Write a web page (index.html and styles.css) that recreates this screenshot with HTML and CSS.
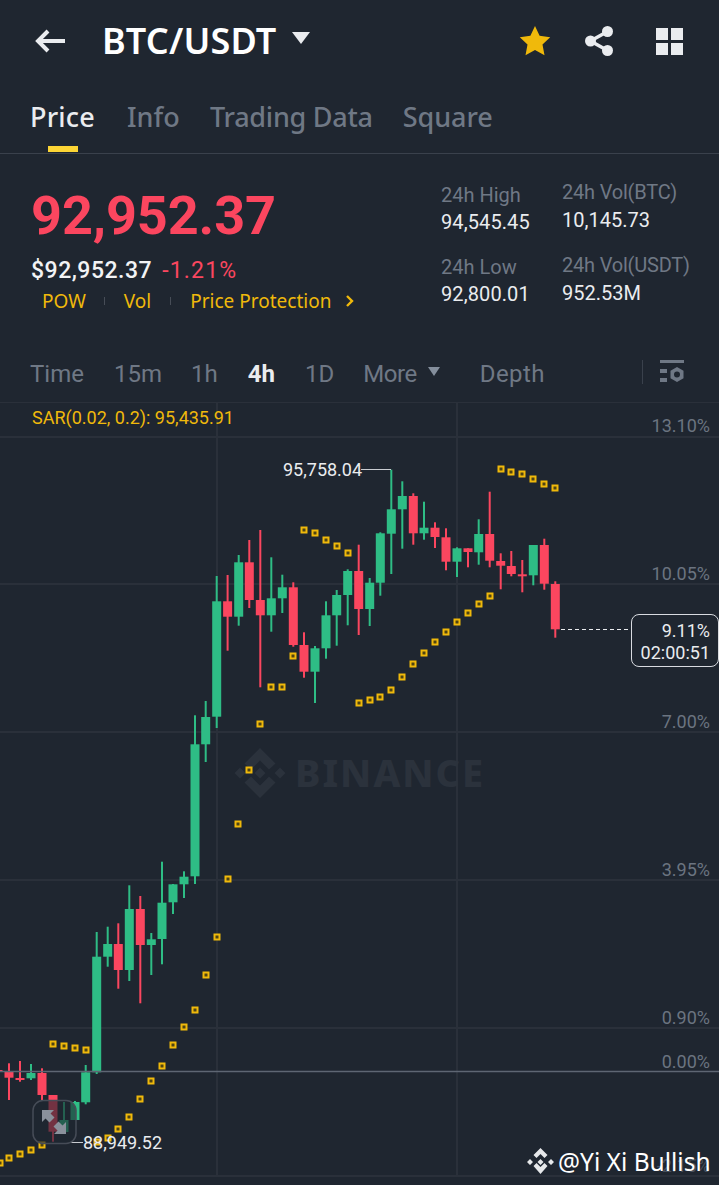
FILE: index.html
```html
<!DOCTYPE html>
<html lang="en">
<head>
<meta charset="utf-8">
<title>BTC/USDT</title>
<link rel="stylesheet" href="styles.css">
</head>
<body>
<div class="page">
  <header class="header">
    <svg class="icon-back" width="32" height="26" viewBox="0 0 32 26"><path d="M30 13H4M13 3 3 13l10 10" fill="none" stroke="#eaecef" stroke-width="4"/></svg>
    <h1 class="pair">BTC/USDT</h1>
    <svg class="icon-caret" width="18" height="12" viewBox="0 0 18 12"><path d="M0 0h18L9 12z" fill="#eaecef"/></svg>
    <div class="header-actions">
      <svg class="act-star" width="32" height="32" viewBox="0 0 32 32"><path d="M16 1l4.600 9.800 10.600 1.400-7.700 7.400 2 10.600L16 25l-9.500 5.200 2-10.600L.8 12.200l10.600-1.400z" fill="#f0b90b"/></svg>
      <svg class="act-share" width="30" height="32" viewBox="0 0 30 32"><g fill="#eaecef"><circle cx="23.500" cy="6.500" r="5.500"/><circle cx="23.500" cy="25.500" r="5.500"/><circle cx="6.500" cy="16" r="5.500"/></g><path d="M23.500 6.500 6.500 16l17 9.500" fill="none" stroke="#eaecef" stroke-width="3.500"/></svg>
      <svg class="act-grid" width="28" height="28" viewBox="0 0 28 28"><path d="M0 1h12v12H0zM15 1h12v12H15zM0 16h12v12H0zM15 16h12v12H15z" fill="#eaecef"/></svg>
    </div>
  </header>
  <nav class="tabs">
    <a class="tab tab-active">Price</a>
    <a class="tab tab-info">Info</a>
    <a class="tab tab-data">Trading Data</a>
    <a class="tab tab-square">Square</a>
  </nav>
  <section class="summary">
    <div class="quote">
      <div class="last-price">92,952.37</div>
      <div class="sub-price"><span class="fiat">$92,952.37</span><span class="change">-1.21%</span></div>
      <div class="tags">
        <span>POW</span><i class="tag-sep"></i><span>Vol</span><i class="tag-sep"></i><span>Price Protection</span>
        <svg class="chev" width="10" height="14" viewBox="0 0 10 14"><path d="M2 2l5 5-5 5" fill="none" stroke="#f0b90b" stroke-width="2.400"/></svg>
      </div>
    </div>
    <div class="stats stats-a">
      <div class="stat"><div class="stat-label">24h High</div><div class="stat-value">94,545.45</div></div>
      <div class="stat"><div class="stat-label">24h Low</div><div class="stat-value">92,800.01</div></div>
    </div>
    <div class="stats stats-b">
      <div class="stat"><div class="stat-label">24h Vol(BTC)</div><div class="stat-value">10,145.73</div></div>
      <div class="stat"><div class="stat-label">24h Vol(USDT)</div><div class="stat-value">952.53M</div></div>
    </div>
  </section>
  <div class="intervals">
    <span class="iv iv-time">Time</span>
    <span class="iv iv-15">15m</span>
    <span class="iv iv-1h">1h</span>
    <span class="iv iv-4h">4h</span>
    <span class="iv iv-1d">1D</span>
    <span class="iv iv-more">More</span>
    <svg class="more-caret" width="12" height="9" viewBox="0 0 12 9"><path d="M0 0h12L6 9z" fill="#848e9c"/></svg>
    <span class="iv iv-depth">Depth</span>
    <i class="iv-sep"></i>
    <svg class="iv-settings" width="24" height="24" viewBox="0 0 24 24"><g fill="#6f7885"><path d="M0 0h24v3H0zM0 9h7v4H0zM0 18h7v4H0z"/><path fill-rule="evenodd" d="M17 7l6.500 3.700v7.600L17 22l-6.500-3.700v-7.600zM17 11.500a3 3 0 1 0 0 6 3 3 0 0 0 0-6z"/></g></svg>
  </div>
  <div class="chart">
    <svg id="plot" class="plot" width="719" height="783" viewBox="0 402 719 783">
      <g id="grid"></g>
      <g class="mark">
        <path d="M260 748l15.500 15.500-6.500 6-9-9-9 9-6.500-6zM260 798l15.500-15.500-6.500-6-9 9-9-9-6.500 6zM234.500 773l5.500-5.500 5.500 5.500-5.500 5.500zM254.500 773l5.500-5.500 5.500 5.500-5.500 5.500zM274.500 773l5.500-5.500 5.500 5.500-5.500 5.500z" fill="#2b323c"/>
        <text x="295" y="787" class="mark-text">BINANCE</text>
      </g>
      <g id="candles"></g>
      <g id="sar"></g>
      <line x1="0" x2="719" y1="1071.500" y2="1071.500" class="zero"/>
      <g class="axis">
        <text x="710" y="432">13.10%</text>
        <text x="710" y="580">10.05%</text>
        <text x="710" y="728">7.00%</text>
        <text x="710" y="876">3.95%</text>
        <text x="710" y="1024">0.90%</text>
        <text x="710" y="1068">0.00%</text>
        <text x="710" y="1172" class="axis-ghost">-2.15%</text>
      </g>
      <text x="32" y="424" class="sar-label">SAR(0.02, 0.2): 95,435.91</text>
      <text x="283" y="476" class="extreme">95,758.04</text>
      <line x1="361" x2="391" y1="469.500" y2="469.500" class="leader"/>
      <text x="83" y="1149" class="extreme">88,949.52</text>
      <line x1="70" x2="83" y1="1142.500" y2="1142.500" class="leader"/>
      <line x1="561" x2="630" y1="629.500" y2="629.500" class="dash"/>
      <g class="zoom-btn">
        <rect x="33" y="1100.500" width="43" height="43" rx="10" class="zoom-box"/>
        <path d="M42 1110h12l-3.500 3.500 4 4-5 5-4-4-3.500 3.500zM66 1134H54l3.500-3.500-4-4 5-5 4 4 3.500-3.500z" fill="#8a919c"/>
      </g>
    </svg>
    <div class="live-tag"><div>9.11%</div><div>02:00:51</div></div>
    <div class="credit">
      <svg width="27" height="28" viewBox="0 0 27 28"><path d="M13.500 0l7 7-3 3-4-4-4 4-3-3zM0 14l3-3 3 3-3 3zM10.500 14l3-3 3 3-3 3zM21 14l3-3 3 3-3 3zM6.500 18l3-3 4 4 4-4 3 3-7 8z" fill="#e6e8ea"/></svg>
      <span>@Yi Xi Bullish</span>
    </div>
  </div>
</div>
<script src="chart.js"></script>
</body>
</html>
```
FILE: styles.css
```css
* { box-sizing: border-box; }
html, body { margin: 0; padding: 0; background: #1f2630; }
.page { width: 719px; height: 1185px; overflow: hidden; background: #1f2630; color: #eaecef; font-family: "Noto Sans", "Liberation Sans", sans-serif; }

.header { height: 82px; display: flex; align-items: center; padding: 0 35px; }
.icon-back { flex: none; margin-top: -1px; }
.pair { margin: 0 0 0 35px; font-size: 36px; font-weight: 600; color: #fff; line-height: 1; letter-spacing: .15px; }
.icon-caret { margin: -6px 0 0 16px; flex: none; }
.header-actions { margin-left: auto; display: flex; align-items: center; }
.act-star { margin-right: 33px; }
.act-share { margin-right: 42px; }

.tabs { height: 72px; display: flex; padding: 17px 0 0 30px; border-bottom: 1px solid #3a414c; position: relative; }
.tab { font-size: 27px; line-height: 36px; color: #6f7885; font-weight: 500; letter-spacing: -.1px; }
.tab-active { color: #eaecef; position: relative; letter-spacing: .2px; }
.tab-active::after { content: ""; position: absolute; left: 18px; top: 47px; width: 30px; height: 6px; background: #fcd535; }
.tab-info { margin-left: 32px; letter-spacing: .1px; }
.tab-data { margin-left: 30px; letter-spacing: -.25px; }
.tab-square { margin-left: 30px; }

.summary { height: 191px; display: flex; position: relative; }
.quote { width: 442px; padding: 29px 0 0 31px; flex: none; }
.last-price { font-family: Roboto, sans-serif; font-weight: 700; font-size: 54px; line-height: 66px; color: #fb465f; letter-spacing: -.1px; }
.sub-price { display: flex; gap: 10px; font-family: Roboto, sans-serif; font-size: 23px; line-height: 30px; margin-top: 7px; letter-spacing: .5px; }
.fiat { color: #f2f3f5; font-weight: 500; }
.change { color: #fb465f; letter-spacing: 1.2px; }
.tags { display: flex; align-items: center; color: #f0b90b; font-size: 19px; line-height: 28px; padding-left: 11px; margin-top: 1px; }
.tag-sep { width: 1px; height: 8px; background: #474d57; margin: 0 18.500px; }
.tag-sep + span + .tag-sep { margin: 0 19px; }
.chev { margin-left: 14px; flex: none; }

.stats { width: 120px; display: flex; flex-direction: column; flex: none; font-family: Roboto, sans-serif; font-size: 20px; }
.stats-a { padding-top: 28px; gap: 18px; }
.stats-b { padding-top: 25px; gap: 18px; width: 157px; }
.stat-label { line-height: 26px; color: #6f7885; margin-left: -1px; }
.stats-b .stat-label { margin-left: 0; letter-spacing: -.2px; }
.stat-value { line-height: 28px; color: #eaecef; margin-left: -1px; letter-spacing: .1px; }
.stats-b .stat-value { margin: 1px 0 0; letter-spacing: 0; }

.intervals { height: 57px; display: flex; align-items: center; position: relative; font-family: Roboto, sans-serif; font-size: 24px; color: #6f7885; padding-left: 30px; }
.iv-15 { margin-left: 30px; }
.iv-1h { margin-left: 29px; }
.iv-4h { margin-left: 30px; color: #eaecef; font-weight: 700; }
.iv-1d { margin-left: 30px; }
.iv-more { margin-left: 29px; letter-spacing: -.4px; }
.more-caret { margin: -4px 0 0 11px; flex: none; }
.iv-depth { margin-left: 40px; letter-spacing: .4px; }
.iv-sep { width: 1px; height: 24px; background: #3a414c; margin-left: auto; margin-top: -3px; }
.iv-settings { margin: -3px 35px 0 17px; flex: none; }

.chart { height: 783px; position: relative; }
.plot { display: block; }
.hline { stroke: #2a303a; stroke-width: 2; }
.vline { stroke: #2a303a; stroke-width: 2; }
.zero { stroke: #5e6673; stroke-width: 1.500; }
.mark-text { font-family: "Noto Sans", sans-serif; font-weight: 800; font-size: 38px; letter-spacing: 2px; fill: #2b323c; }
.axis text { font-family: Roboto, sans-serif; font-size: 18px; fill: #6b7480; text-anchor: end; }
.axis .axis-ghost { fill: #474f5b; }
.sar-label { font-family: Roboto, sans-serif; font-size: 18px; fill: #f0b90b; }
.extreme { font-family: Roboto, sans-serif; font-size: 18px; fill: #eaecef; }
.leader { stroke: #c9ccd1; stroke-width: 1; }
.dash { stroke: #eaecef; stroke-width: 1; stroke-dasharray: 4 3; }
.zoom-box { fill: rgba(31, 38, 48, .62); stroke: #464c57; stroke-width: 1.500; }

.live-tag { position: absolute; left: 631px; top: 212px; width: 88px; height: 53px; border: 1px solid #d8dbe0; border-radius: 8px; background: #1f2630; font-family: Roboto, sans-serif; font-size: 18px; line-height: 22px; text-align: right; padding: 5px 8px 0 0; color: #eaecef; }
.credit { position: absolute; left: 527px; top: 745px; display: flex; align-items: center; gap: 4px; color: #fff; font-size: 24.500px; line-height: 30px; white-space: nowrap; }
.credit svg { flex: none; }
```
FILE: chart.js
```js
var NS = "http://www.w3.org/2000/svg";
function add(parent, tag, attrs) {
  var el = document.createElementNS(NS, tag);
  for (var k in attrs) el.setAttribute(k, attrs[k]);
  document.getElementById(parent).appendChild(el);
}
[402, 437, 584, 732, 880, 1028, 1176].forEach(function (y) {
  add("grid", "line", { x1: 0, x2: 719, y1: y, y2: y, "class": "hline" });
});
[217, 457].forEach(function (x) {
  add("grid", "line", { x1: x, x2: x, y1: 402, y2: 1176, "class": "vline" });
});
/* x, bodyTop, bodyBottom, wickTop, wickBottom, up */
var candles = [
  [-2,1070,1072,1068,1074,0],[9,1071.7,1077.7,1063.3,1100,0],[20,1078,1080,1061,1081.7,0],[31,1073,1078.3,1064,1080,1],
  [42,1073,1095,1068.3,1100,0],[53,1095,1131.7,1095,1141.7,0],[64,1120,1132,1102,1132,1],[75,1102,1120,1101,1120,1],
  [85.7,1072.3,1102.3,1065,1104.3,1],[96.7,956.7,1072.3,932,1074,1],[107.7,944,956.7,926.7,966.7,1],[118.3,944,970,923.3,988.7,0],
  [129.3,909,970,885.3,981,1],[140.3,909,945,896,1003.3,0],[151.3,939.3,945,933,975,1],[162,902.7,939,861.7,964.3,1],
  [173,884.3,902.3,884,914,1],[184,876.7,884.3,871.3,898,1],[195,744.3,876.3,715.3,884,1],[205.7,717,744.3,701,762,1],
  [216.7,601.3,716.7,576,728,1],[227.6,601.3,616.7,575,650.7,0],[238.7,562.3,616.7,555,625.7,1],[249.3,562.3,600,540,608,0],
  [260.3,600,615.3,530,687.3,0],[271.3,598.3,615.3,557.3,631.7,1],[282.3,587.3,598.3,574.7,613,1],[293.3,587.3,645,582.3,646.7,0],
  [304,645,671.7,632.3,677.7,0],[315,648.3,671.7,646,703,1],[326,615.3,648.3,601.3,658.7,1],[336.7,595,615.3,590,645.7,1],
  [347.7,571,595,569.3,625.3,1],[358.7,571,609,544.7,635,0],[369.7,582.7,609,578,626,1],[380.3,533.3,582.7,532.3,595.7,1],
  [391.3,509.3,533.7,469.7,574,1],[402.3,496,509.3,481.3,548.7,1],[413.3,496,533.3,493.3,544.7,0],[424,527.7,533.3,501.7,539.7,1],
  [435,527.7,537,522.3,548,0],[446,537.3,561.7,528.3,570.3,0],[457,548.3,561.7,547.3,577,1],[468,548.3,552,548.3,567.3,0],
  [478.7,534,552.3,519.3,564.7,1],[489.7,534,560.7,491.7,567.3,0],[500.7,561,565.7,553.3,589.3,0],[511.3,566,574,551,576.3,0],
  [522.3,574.3,576.3,560,592.3,0],[533.3,545,575.3,545,585.3,1],[544.3,545,583.7,538.7,589.7,0],[555.3,584,629.3,581.3,637.7,0]
];
candles.forEach(function (c) {
  var color = c[5] ? "#2ebd85" : "#fb465f";
  add("candles", "rect", { x: c[0] - 1, y: c[3], width: 2, height: c[4] - c[3], fill: color });
  add("candles", "rect", { x: c[0] - 4.5, y: c[1], width: 9, height: c[2] - c[1], fill: color });
});
var sar = [
  [0,1163],[9,1158.3],[20,1154],[31,1149.7],[42,1145],[53,1043.7],[64,1045.7],[75,1048],[85.7,1049.7],[96.7,1142.3],[107.7,1138],
  [118.3,1129.3],[129.3,1117],[140.3,1098.7],[151.3,1081.3],[162,1066],[173,1045.3],[184,1027],[195,1010.3],[205.7,975],[216.7,936.7],
  [227.7,879],[238.3,824.3],[249.3,770.3],[260.3,724.3],[271.3,687.3],[282.3,687.3],[293.3,656],[304,530],[315,533],[326,539.7],
  [337,546.3],[347.7,552.7],[358.7,703],[369.7,700],[380.3,696.7],[391.3,690.3],[402.3,677],[413.3,664.3],[424.3,652.7],[435,641.7],
  [446,631.7],[457,621.7],[468,612.7],[478.7,604],[489.7,596],[500.7,469.3],[511.3,472],[522.3,474.3],[533.3,479],[544.3,483.7],[555.3,488]
];
sar.forEach(function (d) {
  var x = Math.round(d[0]), y = Math.round(d[1]);
  add("sar", "rect", { x: x - 3.5, y: y - 3.5, width: 7, height: 7, fill: "#f0b90b" });
  add("sar", "rect", { x: x - 1.5, y: y - 1.5, width: 3, height: 3, fill: "#4f4412" });
});
```
